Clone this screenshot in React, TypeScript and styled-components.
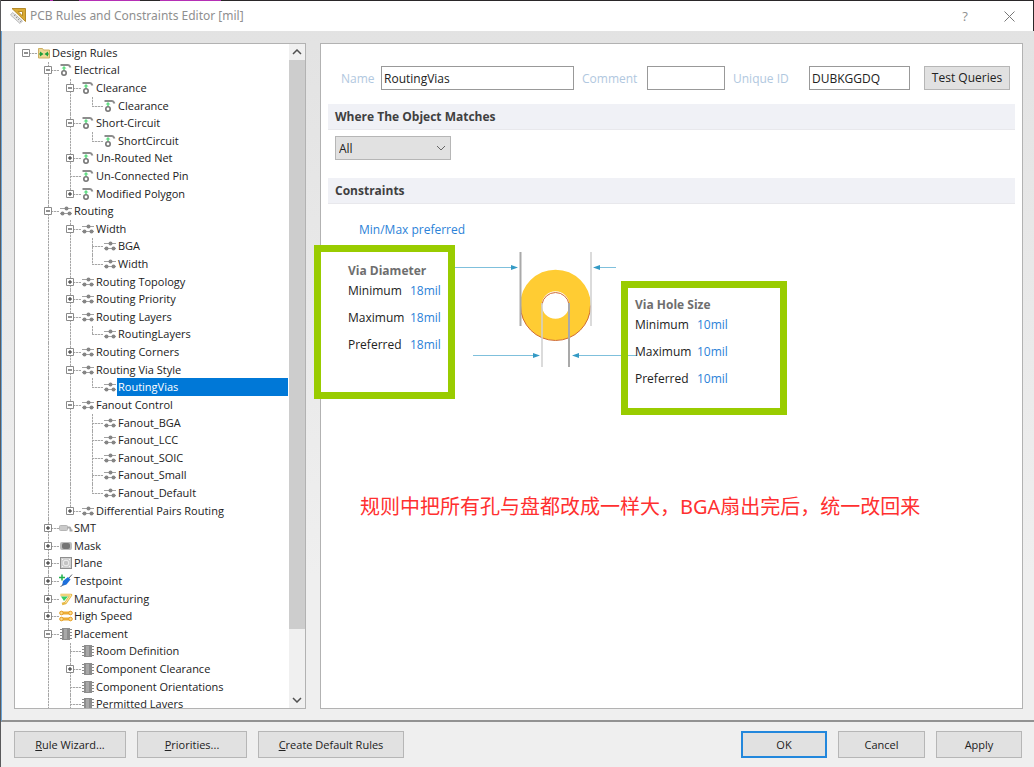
import React from "react";
import styled, { createGlobalStyle, css } from "styled-components";

const GlobalStyle = createGlobalStyle`
  *, *::before, *::after { box-sizing: border-box; }
  body { margin: 0; overflow: hidden; }
  button, input, select { font: inherit; color: inherit; }
`;

const Dialog = styled.div`
  display: flex;
  flex-direction: column;
  height: 100vh;
  border-left: 1px solid #5a5a5c;
  background: linear-gradient(#e2e2e2, #efefef 75%);
  color: #222;
  font: 11px/16px "Open Sans", "Noto Sans", "Noto Sans CJK SC", sans-serif;
`;

const TopEdge = styled.div`
  flex: none;
  height: 1px;
  background: linear-gradient(
    90deg,
    #2a2729 49px, #b52fb5 49px 52px, #2a2729 52px 78px, #b52fb5 78px 139px,
    #2a2729 139px 159px, #b52fb5 159px 220px, #2a2729 220px
  );
`;

const TitleBar = styled.header`
  display: flex;
  align-items: center;
  flex: none;
  height: 30px;
  padding: 0 16px 0 9px;
  gap: 4px;
  border-right: 1px solid #2a2729;
  background: #fff;
  color: #8f8f8f;
`;

const Title = styled.h1`
  flex: 1;
  margin: 0;
  font: 400 12px/16px "Noto Sans", sans-serif;
`;

const TitleButton = styled.button`
  display: grid;
  place-items: center;
  width: 16px;
  height: 24px;
  margin-left: 24px;
  padding: 0;
  border: 0;
  background: none;
  font-size: 13px;
`;

const Body = styled.main`
  display: flex;
  flex: 1;
  min-height: 0;
  gap: 14px;
  padding: 12px 11px 11px 12px;
  border-left: 1px solid #6aa5d8;
  border-bottom: 2px solid #929292;
`;

const TreePanel = styled.nav`
  display: flex;
  flex: none;
  width: 292px;
  border: 1px solid #b2b2b2;
  background: #fff;
  overflow: hidden;
`;

const TreeList = styled.ul`
  display: grid;
  flex: 1;
  grid-auto-rows: 1fr;
  height: 669px;
  margin: 0;
  padding: 0 1px 0 0;
  list-style: none;
`;

const TreeRow = styled.li`
  display: flex;
  align-items: center;
  min-height: 0;
`;

const Indent = styled.span`
  flex: none;
  width: 22px;
`;

const Guide = styled.span<{ $up?: boolean; $down?: boolean }>`
  position: relative;
  display: grid;
  place-items: center;
  flex: none;
  align-self: stretch;
  width: 22px;
  &::before {
    content: "";
    position: absolute;
    left: 11px;
    top: ${(p) => (p.$up ? "0" : "50%")};
    bottom: ${(p) => (p.$down ? "0" : "50%")};
    width: 1px;
    background: repeating-linear-gradient(#a6a6a6 0 2px, #e4e4e4 2px 3px);
  }
`;

const Branch = styled(Guide)`
  &::after {
    content: "";
    position: absolute;
    top: 50%;
    left: 11px;
    right: 0;
    height: 1px;
    background: repeating-linear-gradient(90deg, #a6a6a6 0 2px, #e4e4e4 2px 3px);
  }
`;

const Toggle = styled.button`
  position: relative;
  z-index: 1;
  display: grid;
  width: 8px;
  height: 8px;
  padding: 0;
  border: 0;
  background: #fff;
`;

const RowLabel = styled.span<{ $selected?: boolean }>`
  display: flex;
  align-items: center;
  align-self: stretch;
  white-space: nowrap;
  padding-left: 1px;
  ${(p) =>
    p.$selected &&
    css`
      flex: 1;
      background: #0078d7;
      color: #fff;
    `}
`;

const ScrollBar = styled.div`
  display: flex;
  flex-direction: column;
  flex: none;
  width: 16px;
  background: #f0f0f0;
`;

const ScrollButton = styled.button`
  display: grid;
  place-items: center;
  height: 16px;
  padding: 0;
  border: 0;
  background: none;
`;

const Thumb = styled.div`
  flex: 9;
  background: #cdcdcd;
`;

const ThumbRest = styled.div`
  flex: 1;
`;

const RulePanel = styled.section`
  flex: 1;
  min-width: 0;
  padding: 0 7px;
  border: 1px solid #b2b2b2;
  background: #fff;
  font-size: 12px;
`;

const FieldRow = styled.div`
  display: flex;
  align-items: center;
  height: 60px;
  padding: 8px 5px 0 13px;
`;

const FieldLabel = styled.label<{ $width: number }>`
  flex: none;
  width: ${(p) => p.$width}px;
  padding-top: 2px;
  color: #b1c8e0;
  white-space: nowrap;
`;

const TextBox = styled.input<{ $width: number }>`
  width: ${(p) => p.$width}px;
  height: 24px;
  margin-right: 8px;
  padding: 0 2px;
  border: 1px solid #999;
  background: #fff;
`;

const GreyButton = styled.button<{ $width: number; $primary?: boolean }>`
  flex: none;
  width: ${(p) => p.$width}px;
  height: 27px;
  padding: 0;
  border: ${(p) => (p.$primary ? "2px solid #2287dc" : "1px solid #b6b6b6")};
  background: #e1e1e1;
  white-space: nowrap;
`;

const QueryButton = styled(GreyButton)`
  height: 24px;
  margin-left: auto;
`;

const SectionTitle = styled.h2`
  margin: 0;
  padding: 0 7px;
  border-bottom: 1px solid #e8e8ec;
  background: #f0f1f6;
  color: #404040;
  font-size: 12px;
  line-height: 25px;
`;

const ScopeRow = styled.div`
  height: 48px;
  padding: 6px 7px;
`;

const SelectWrap = styled.div`
  position: relative;
  width: 116px;
  svg {
    position: absolute;
    right: 5px;
    top: 9px;
    pointer-events: none;
  }
`;

const ScopeSelect = styled.select`
  display: block;
  appearance: none;
  width: 100%;
  height: 24px;
  padding: 1px 3px 0;
  border: 1px solid #b6b6b6;
  border-radius: 0;
  background: #e1e1e1;
`;

const ValueButton = styled.button`
  padding: 0;
  border: 0;
  background: none;
  color: #2c82d8;
`;

const ModeRow = styled.div`
  padding: 17px 31px 0;
  line-height: 18px;
`;

const Diagram = styled.div`
  display: flex;
  align-items: flex-start;
  padding: 11px 0 0 20px;
`;

const SizeGroup = styled.section<{ $drop: number }>`
  position: relative;
  flex: none;
  width: 107px;
  margin-top: ${(p) => p.$drop}px;
`;

const GroupTitle = styled.h3`
  margin: 0;
  color: #6e6e6e;
  font-size: 12px;
  line-height: 13px;
  white-space: nowrap;
`;

const SizeRow = styled.div`
  display: grid;
  grid-template-columns: 62px auto;
  justify-content: start;
  align-items: center;
  height: 27px;
`;

interface Box {
  top: number;
  left: number;
  width: number;
  height: number;
}

const Highlight = styled.div<{ $box: Box }>`
  position: absolute;
  top: ${(p) => p.$box.top}px;
  left: ${(p) => p.$box.left}px;
  width: ${(p) => p.$box.width}px;
  height: ${(p) => p.$box.height}px;
  border: 7px solid #9c0;
  pointer-events: none;
`;

const ViaDrawing = styled.svg`
  flex: none;
  margin-right: -2px;
`;

const Note = styled.p`
  margin: 101px 0 0 32px;
  color: #ff3030;
  font: 20px/28px "Noto Sans", "Noto Sans CJK SC", sans-serif;
`;

const Footer = styled.footer`
  display: flex;
  align-items: center;
  flex: none;
  height: 45px;
  gap: 11px;
  padding: 0 12px 0 13px;
`;

const Spacer = styled.div`
  flex: 1;
`;

type IconKind =
  | "folder" | "electrical" | "routing" | "smt" | "mask" | "plane"
  | "testpoint" | "manufacturing" | "speed" | "chip";

const iconArt: Record<IconKind, React.ReactNode> = {
  folder: (
    <>
      <path d="M1.500 2.500h4l1 1.500h6v8h-11z" fill="#ecd794" stroke="#cdb062" />
      <path d="M3 5.500l3.500 2.500L3 10.500zM11 5.500L7.500 8l3.500 2.500z" fill="#1fa03b" />
      <path d="M2 8h3M9 8h3" stroke="#1fa03b" />
    </>
  ),
  electrical: (
    <>
      <path d="M1.500 2h7.500q1.500 0 2.500 2.500" fill="none" stroke="#8c8c8c" strokeWidth="2" />
      <path d="M5 3l2.500 2.500H5.800V7.500H4.200V5.500H2.500z" fill="#5fdc82" />
      <circle cx="5" cy="10" r="2.200" fill="#fff" stroke="#777" strokeWidth="1.600" />
    </>
  ),
  routing: (
    <>
      <path d="M1 4.500h12M1 9.500h12" stroke="#a2a2a2" />
      <g fill="#858585">
        <circle cx="7.500" cy="4.500" r="2" />
        <circle cx="3.500" cy="9.500" r="2" />
        <circle cx="10.500" cy="9.500" r="2" />
      </g>
    </>
  ),
  smt: (
    <>
      <rect x="0.500" y="4.500" width="8" height="5" rx="1" fill="#cacaca" stroke="#b5b5b5" />
      <path d="M8.500 6.500h2q1 0 1 3h2" fill="none" stroke="#a8a8a8" strokeWidth="2" />
    </>
  ),
  mask: (
    <>
      <rect x="1" y="3" width="12" height="8" rx="2" fill="#bcbcbc" />
      <rect x="3" y="4" width="8" height="6" rx="2" fill="#757575" />
    </>
  ),
  plane: (
    <>
      <rect x="1.500" y="1.500" width="11" height="11" fill="#cfcfcf" stroke="#8e8e8e" />
      <circle cx="7" cy="7" r="2.800" fill="#c4c4c4" stroke="#efefef" />
      <path d="M3 3l1 1M11 3l-1 1M3 11l1-1M11 11l-1-1" stroke="#f4f4f4" />
    </>
  ),
  testpoint: (
    <>
      <path d="M0 3.500h6M3 .5v6" stroke="#22b14c" strokeWidth="1.500" />
      <path d="M3 12l1-5 5-4 2.500 2.500-4 5z" fill="#1d70dc" />
      <path d="M10 4l3-3.500M1.500 13l3-3" stroke="#5b6470" />
    </>
  ),
  manufacturing: (
    <>
      <path d="M1.500 3h10.500l-5.500 8-3.500 1" fill="none" stroke="#e6b848" strokeWidth="2.600" strokeLinejoin="round" />
      <path d="M1.500 3h10.500l-5.500 8" fill="none" stroke="#fae9ae" strokeWidth="1" />
      <path d="M2 4.500h7L5 9z" fill="#35cc62" />
    </>
  ),
  speed: (
    <>
      <path d="M2 4h10M2 10h10" stroke="#edac33" strokeWidth="3" />
      <g fill="#fbd98c" stroke="#e59f23">
        <circle cx="2.500" cy="4" r="1.800" />
        <circle cx="11.500" cy="4" r="1.800" />
        <circle cx="2.500" cy="10" r="1.800" />
        <circle cx="11.500" cy="10" r="1.800" />
      </g>
    </>
  ),
  chip: (
    <>
      <path d="M1 2.500h12M1 5.500h12M1 8.500h12M1 11.500h12" stroke="#8a8a8a" />
      <rect x="3" y="1" width="8" height="12" fill="#8d8d8d" />
      <rect x="5" y="2" width="3" height="10" fill="#a8a8a8" />
    </>
  ),
};

const RowIcon = ({ kind }: { kind: IconKind }) => (
  <svg width="14" height="14" viewBox="0 0 14 14" aria-hidden="true">
    {iconArt[kind]}
  </svg>
);

type Entry = [depth: number, label: string, icon: IconKind, state?: "open" | "closed"];

const entries: Entry[] = [
  [0, "Design Rules", "folder", "open"],
  [1, "Electrical", "electrical", "open"],
  [2, "Clearance", "electrical", "open"],
  [3, "Clearance", "electrical"],
  [2, "Short-Circuit", "electrical", "open"],
  [3, "ShortCircuit", "electrical"],
  [2, "Un-Routed Net", "electrical", "closed"],
  [2, "Un-Connected Pin", "electrical"],
  [2, "Modified Polygon", "electrical", "closed"],
  [1, "Routing", "routing", "open"],
  [2, "Width", "routing", "open"],
  [3, "BGA", "routing"],
  [3, "Width", "routing"],
  [2, "Routing Topology", "routing", "closed"],
  [2, "Routing Priority", "routing", "closed"],
  [2, "Routing Layers", "routing", "open"],
  [3, "RoutingLayers", "routing"],
  [2, "Routing Corners", "routing", "closed"],
  [2, "Routing Via Style", "routing", "open"],
  [3, "RoutingVias", "routing"],
  [2, "Fanout Control", "routing", "open"],
  [3, "Fanout_BGA", "routing"],
  [3, "Fanout_LCC", "routing"],
  [3, "Fanout_SOIC", "routing"],
  [3, "Fanout_Small", "routing"],
  [3, "Fanout_Default", "routing"],
  [2, "Differential Pairs Routing", "routing", "closed"],
  [1, "SMT", "smt", "closed"],
  [1, "Mask", "mask", "closed"],
  [1, "Plane", "plane", "closed"],
  [1, "Testpoint", "testpoint", "closed"],
  [1, "Manufacturing", "manufacturing", "closed"],
  [1, "High Speed", "speed", "closed"],
  [1, "Placement", "chip", "open"],
  [2, "Room Definition", "chip"],
  [2, "Component Clearance", "chip", "closed"],
  [2, "Component Orientations", "chip"],
  [2, "Permitted Layers", "chip"],
];

/* The list goes on below the fold, so its open branches keep their lines. */
const continues = (index: number, level: number) => {
  if (level === 0) return false;
  const next = entries.slice(index + 1).find(([depth]) => depth <= level);
  return next ? next[0] === level : level < 3;
};

const Tree = () => (
  <TreeList role="tree" aria-label="Design rules">
    {entries.map(([depth, label, icon, state], index) => (
      <TreeRow
        key={index}
        role="treeitem"
        aria-level={depth + 1}
        aria-expanded={state ? state === "open" : undefined}
        aria-selected={label === "RoutingVias"}
      >
        {Array.from({ length: depth }, (_, level) =>
          continues(index, level) ? <Guide key={level} $up $down /> : <Indent key={level} />
        )}
        <Branch $up={depth > 0} $down={continues(index, depth)}>
          {state && (
            <Toggle aria-label={`${state === "open" ? "Collapse" : "Expand"} ${label}`}>
              <svg width="8" height="8" viewBox="0 0 8 8">
                <path d="M.5 .5h7v7h-7z" fill="#fff" stroke="#8a8a8a" />
                <path d={state === "open" ? "M2 4h4" : "M2 4h4M4 2v4"} stroke="#222" />
              </svg>
            </Toggle>
          )}
        </Branch>
        <RowIcon kind={icon} />
        <RowLabel $selected={label === "RoutingVias"}>{label}</RowLabel>
      </TreeRow>
    ))}
  </TreeList>
);

const Arrow = ({ up, thin }: { up?: boolean; thin?: boolean }) => (
  <svg width="10" height="6" viewBox="0 0 10 6" aria-hidden="true">
    <path
      d={up ? "M1 5l4-4 4 4" : "M1 1l4 4 4-4"}
      fill="none"
      stroke={thin ? "#666" : "#505050"}
      strokeWidth={thin ? 1 : 1.5}
    />
  </svg>
);

const SizeList = ({ title, value, drop, box }: {
  title: string;
  value: string;
  drop: number;
  box: Box;
}) => (
  <SizeGroup $drop={drop}>
    <GroupTitle>{title}</GroupTitle>
    {["Minimum", "Maximum", "Preferred"].map((name) => (
      <SizeRow key={name}>
        <span>{name}</span>
        <ValueButton aria-label={`${title} ${name} ${value}`}>{value}</ValueButton>
      </SizeRow>
    ))}
    <Highlight $box={box} />
  </SizeGroup>
);

const Via = () => (
  <ViaDrawing width="182" height="124" viewBox="0 0 182 124" role="img" aria-label="Via cross-section">
    <circle cx="100.500" cy="55" r="24.500" fill="none" stroke="#ffcc33" strokeWidth="21.500" />
    <path d="M65.500 55.500a35 35 0 0 0 70 0" fill="none" stroke="#cf6c35" />
    <path d="M87 54.500a13.600 13.600 0 0 1 27 0" fill="none" stroke="#cf6c35" />
    <path d="M65.500 2v74M114 53v64" stroke="#a9a9a9" strokeWidth="2" />
    <path d="M136 2v74M87 53v64" stroke="#cfcfcf" strokeWidth="1.500" />
    <path d="M0 17.500h58M145 17.500h16M18 105.500h60M123 105.500h61" stroke="#7fc0dc" />
    <path
      d="M56 15l7 2.500-7 2.500zM145 15l-7 2.500 7 2.500zM78 103l7 2.500-7 2.500zM124 103l-7 2.500 7 2.500z"
      fill="#349ac5"
    />
  </ViaDrawing>
);

const FooterButton = ({ text, width }: { text: string; width: number }) => (
  <GreyButton $width={width}>
    <u>{text[0]}</u>
    {text.slice(1)}
  </GreyButton>
);

export default function App() {
  return (
    <Dialog>
      <GlobalStyle />
      <TopEdge />
      <TitleBar>
        <svg width="16" height="16" viewBox="0 0 16 16" aria-hidden="true">
          <path d="M2 .5h13.500v13z" fill="#d9ab35" stroke="#b58a28" />
          <path d="M8 3.500h4.500v4.500z" fill="#fff" stroke="#b58a28" />
          <path d="M2.500 4.500l10 8.500-2.500 2.500-9.500-8.500z" fill="#e4e4e4" stroke="#bdbdbd" />
          <path d="M4 8l1.500-1.500M6 10l1.500-1.500M8 12l1.500-1.500M10 14l1.500-1.500" stroke="#999" />
        </svg>
        <Title>PCB Rules and Constraints Editor [mil]</Title>
        <TitleButton aria-label="Help">?</TitleButton>
        <TitleButton aria-label="Close">
          <svg width="11" height="11" viewBox="0 0 11 11">
            <path d="M.5 .5l10 10M10.500 .5l-10 10" stroke="#777" />
          </svg>
        </TitleButton>
      </TitleBar>
      <Body>
        <TreePanel>
          <Tree />
          <ScrollBar>
            <ScrollButton aria-label="Scroll up"><Arrow up /></ScrollButton>
            <Thumb />
            <ThumbRest />
            <ScrollButton aria-label="Scroll down"><Arrow /></ScrollButton>
          </ScrollBar>
        </TreePanel>
        <RulePanel>
          <FieldRow>
            <FieldLabel $width={40} htmlFor="name">Name</FieldLabel>
            <TextBox $width={193} id="name" defaultValue="RoutingVias" />
            <FieldLabel $width={65} htmlFor="comment">Comment</FieldLabel>
            <TextBox $width={78} id="comment" />
            <FieldLabel $width={76} htmlFor="uid">Unique ID</FieldLabel>
            <TextBox $width={101} id="uid" defaultValue="DUBKGGDQ" />
            <QueryButton $width={86}>Test Queries</QueryButton>
          </FieldRow>
          <SectionTitle>Where The Object Matches</SectionTitle>
          <ScopeRow>
            <SelectWrap>
              <ScopeSelect aria-label="Where the object matches" defaultValue="All">
                <option>All</option>
              </ScopeSelect>
              <Arrow thin />
            </SelectWrap>
          </ScopeRow>
          <SectionTitle>Constraints</SectionTitle>
          <ModeRow>
            <ValueButton>Min/Max preferred</ValueButton>
          </ModeRow>
          <Diagram>
            <SizeList
              title="Via Diameter"
              value="18mil"
              drop={14}
              box={{ top: -19, left: -34, width: 141, height: 154 }}
            />
            <Via />
            <SizeList
              title="Via Hole Size"
              value="10mil"
              drop={48}
              box={{ top: -17, left: -14, width: 166, height: 134 }}
            />
          </Diagram>
          <Note>规则中把所有孔与盘都改成一样大，BGA扇出完后，统一改回来</Note>
        </RulePanel>
      </Body>
      <Footer>
        <FooterButton text="Rule Wizard..." width={112} />
        <FooterButton text="Priorities..." width={110} />
        <FooterButton text="Create Default Rules" width={146} />
        <Spacer />
        <GreyButton $width={86} $primary>OK</GreyButton>
        <GreyButton $width={87}>Cancel</GreyButton>
        <GreyButton $width={86}>Apply</GreyButton>
      </Footer>
    </Dialog>
  );
}
